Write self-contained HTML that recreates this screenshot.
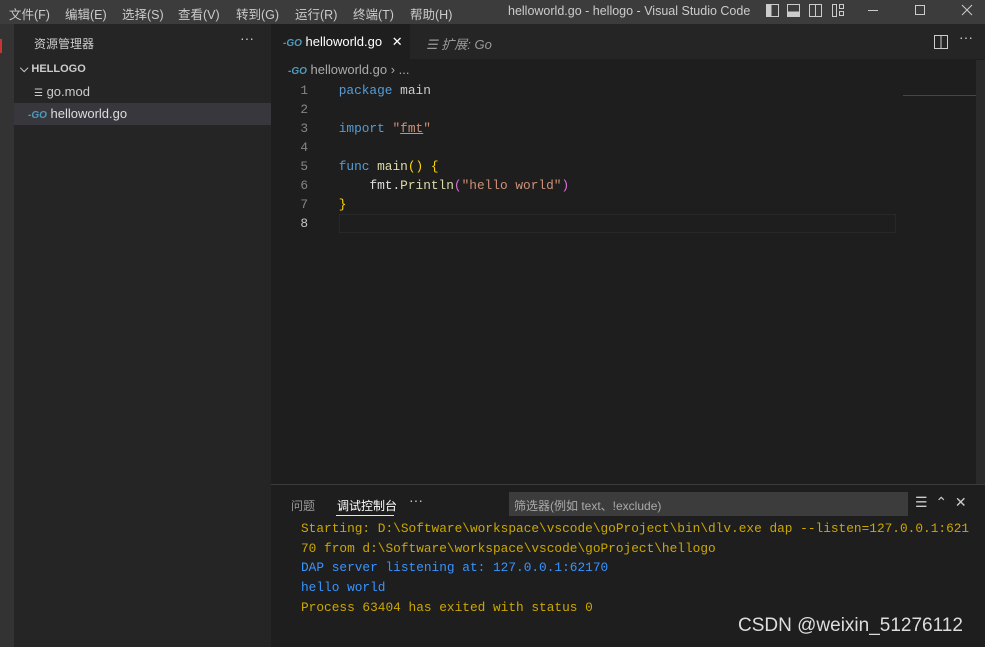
<!DOCTYPE html>
<html><head><meta charset="utf-8"><style>
*{margin:0;padding:0;box-sizing:border-box}
body{width:985px;height:647px;overflow:hidden;background:#1e1e1e;font-family:"Liberation Sans","Noto Sans CJK SC",sans-serif;color:#ccc;position:relative;font-size:13px}
.abs{position:absolute}
#title{left:0;top:0;width:985px;height:24px;background:#3c3c3c;}
#title span{position:absolute;top:4px;font-size:12.5px;color:#ccc}
#act{left:0;top:24px;width:14px;height:623px;background:#333}
#side{left:14px;top:24px;width:257px;height:623px;background:#252526}
#tabs{left:271px;top:24px;width:714px;height:35px;background:#252526}
.mono{font-family:"Liberation Mono","DejaVu Sans Mono",monospace}
.go{color:#519aba;font-weight:bold;font-size:10px;font-style:italic}
.code div{height:19px;line-height:19px;white-space:pre}
.ln{color:#858585;text-align:right;width:34px}
.k{color:#569cd6}.s{color:#ce9178}.f{color:#dcdcaa}.y{color:#ffd700}.p{color:#da70d6}
#panel{left:271px;top:484px;width:714px;height:163px;background:#1e1e1e;border-top:1px solid #3c3c3c}
.con div{height:19.7px;line-height:19.7px;white-space:pre;font-size:12.8px}
.o{color:#cca700}.b{color:#3794ff}
</style></head><body>
<div id="title" class="abs">
<span style="left:9px">文件(F)</span><span style="left:65px">编辑(E)</span><span style="left:122px">选择(S)</span><span style="left:178px">查看(V)</span><span style="left:236px">转到(G)</span><span style="left:295px">运行(R)</span><span style="left:353px">终端(T)</span><span style="left:410px">帮助(H)</span>
<span style="left:508px">helloworld.go - hellogo - Visual Studio Code</span>
<svg class="abs" style="left:766px;top:3px" width="86" height="16" fill="none" stroke="#ccc"><rect x="0.5" y="1.5" width="12" height="12"/><rect x="1" y="2" width="4" height="11" fill="#ccc"/><rect x="21.5" y="1.5" width="12" height="12"/><rect x="22" y="9" width="11" height="4" fill="#ccc"/><rect x="43.5" y="1.5" width="12" height="12"/><line x1="49.5" y1="2" x2="49.5" y2="13"/><rect x="66.5" y="1.5" width="4" height="12"/><rect x="73.5" y="1.5" width="4" height="4"/><rect x="73.5" y="8.5" width="4" height="4"/></svg>
<svg class="abs" style="left:868px;top:4px" width="110" height="14" stroke="#ccc" fill="none"><line x1="0" y1="6.5" x2="10" y2="6.5"/><rect x="47.5" y="1.5" width="9" height="9"/><path d="M94 1l10 10M104 1l-10 10"/></svg>
</div>
<div id="act" class="abs"><div class="abs" style="left:0;top:15px;width:2px;height:14px;background:#c33"></div></div>
<div id="side" class="abs">
<div class="abs" style="left:20px;top:11px;font-size:12px">资源管理器</div>
<div class="abs" style="left:226px;top:6px;font-size:14px">···</div>
<div class="abs" style="left:6px;top:39px;font-size:11px;font-weight:bold">⌵ HELLOGO</div>
<div class="abs" style="left:20px;top:60px;font-size:13px"><span style="color:#ccc;font-size:10px">☰</span> go.mod</div>
<div class="abs" style="left:0;top:79px;width:257px;height:22px;background:#37373d"></div>
<div class="abs" style="left:14px;top:82px;font-size:13px;color:#ddd"><span class="go">-GO</span> helloworld.go</div>
</div>
<div id="tabs" class="abs">
<div class="abs" style="left:0;top:0;width:139px;height:35px;background:#1e1e1e;padding:10px 0 0 12px;color:#fff;font-size:13px"><span class="go">-GO</span> helloworld.go <span style="margin-left:6px">✕</span></div>
<div class="abs" style="left:155px;top:10px;color:#999;font-style:italic">☰ 扩展: Go</div>
<svg class="abs" style="left:663px;top:11px" width="14" height="14" fill="none" stroke="#ccc"><rect x="0.5" y="0.5" width="13" height="13"/><line x1="7" y1="0" x2="7" y2="14"/></svg>
<div class="abs" style="left:688px;top:5px;font-size:14px">···</div>
</div>
<div class="abs" style="left:288px;top:62px;color:#aaa;font-size:13px"><span class="go">-GO</span> helloworld.go › ...</div>
<div class="abs mono code" style="left:274px;top:81px;font-size:12.8px">
<div><span class="ln" style="display:inline-block">1</span>    <span class="k">package</span> main</div>
<div><span class="ln" style="display:inline-block">2</span></div>
<div><span class="ln" style="display:inline-block">3</span>    <span class="k">import</span> <span class="s">"<u>fmt</u>"</span></div>
<div><span class="ln" style="display:inline-block">4</span></div>
<div><span class="ln" style="display:inline-block">5</span>    <span class="k">func</span> <span class="f">main</span><span class="y">()</span> <span class="y">{</span></div>
<div><span class="ln" style="display:inline-block">6</span>        <span style="color:#ddd">fmt.</span><span class="f">Println</span><span class="p">(</span><span class="s">"hello world"</span><span class="p">)</span></div>
<div><span class="ln" style="display:inline-block">7</span>    <span class="y">}</span></div>
<div><span class="ln" style="display:inline-block;color:#c6c6c6">8</span></div>
</div>
<div class="abs" style="left:339px;top:214px;width:557px;height:19px;border:1px solid #282828"></div>
<div class="abs" style="left:976px;top:60px;width:9px;height:424px;background:#2a2a2a"></div>
<div class="abs" style="left:903px;top:95px;width:73px;height:1px;background:#264f78"></div>
<div id="panel" class="abs">
<div class="abs" style="left:20px;top:12px;color:#999;font-size:12px">问题</div>
<div class="abs" style="left:66px;top:12px;color:#fff;font-size:12px">调试控制台</div>
<div class="abs" style="left:65px;top:30px;width:58px;height:1px;background:#e7e7e7"></div>
<div class="abs" style="left:138px;top:7px;font-size:14px">···</div>
<div class="abs" style="left:238px;top:7px;width:399px;height:24px;background:#3c3c3c;color:#aaa;font-size:12px;padding:5px 5px">筛选器(例如 text、!exclude)</div>
<div class="abs" style="left:644px;top:9px;font-size:14px">☰ &nbsp;⌃ &nbsp;✕</div>
<div class="abs mono con" style="left:30px;top:34px">
<div class="o">Starting: D:\Software\workspace\vscode\goProject\bin\dlv.exe dap --listen=127.0.0.1:621</div>
<div class="o">70 from d:\Software\workspace\vscode\goProject\hellogo</div>
<div class="b">DAP server listening at: 127.0.0.1:62170</div>
<div class="b">hello world</div>
<div class="o">Process 63404 has exited with status 0</div>
</div>
<div class="abs" style="left:467px;top:130px;color:#ddd;font-size:19px">CSDN @weixin_51276112</div>
</div>
</body></html>
